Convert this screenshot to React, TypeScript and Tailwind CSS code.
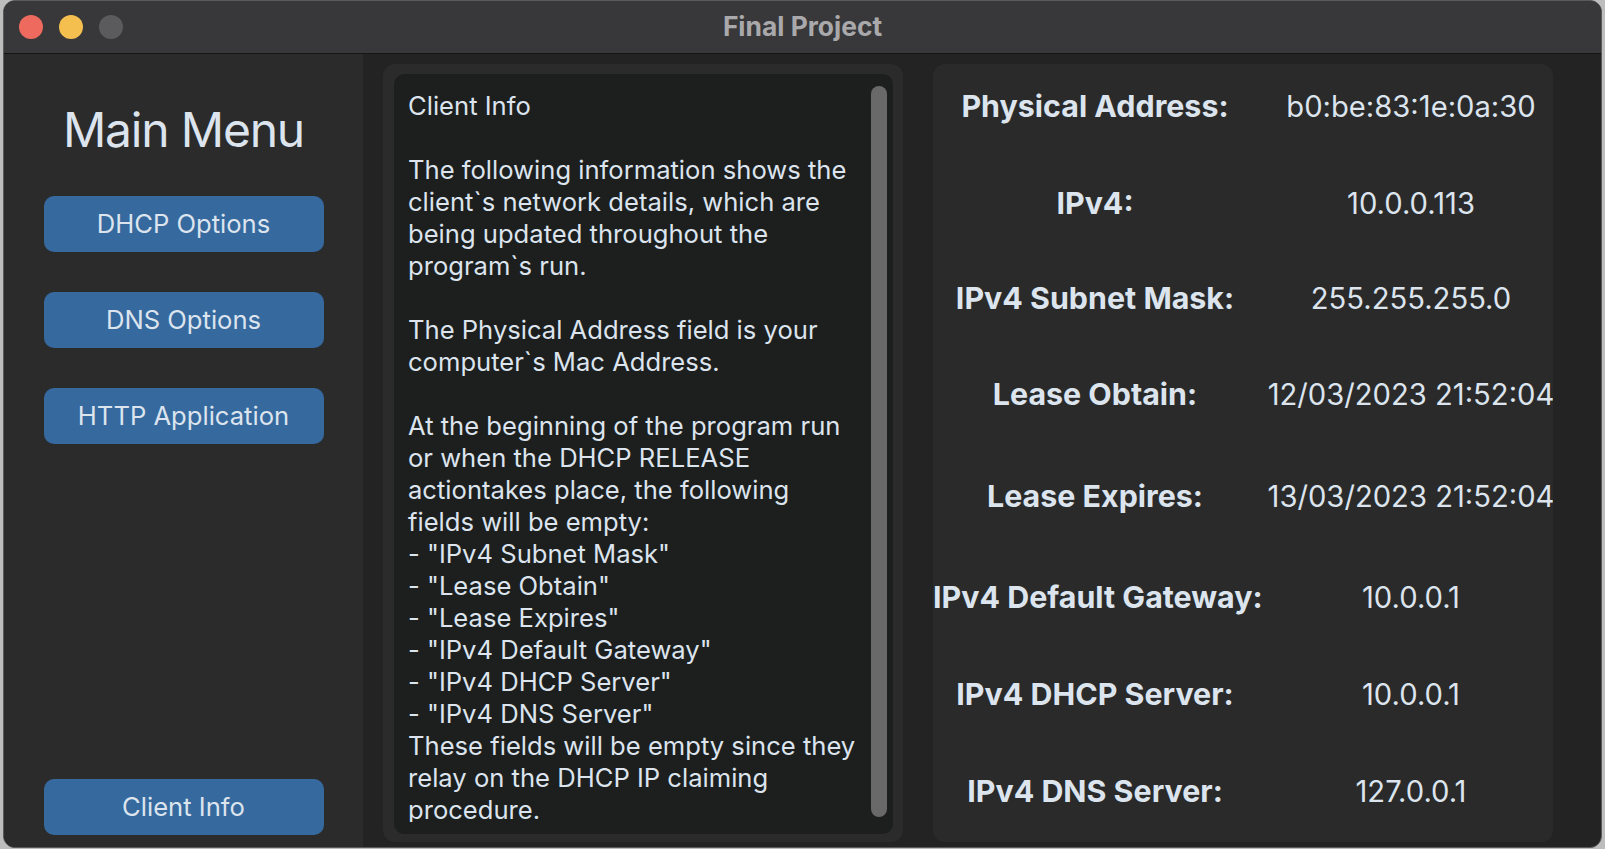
import React from "react";

const infoLines: string[] = [
  "Client Info",
  "",
  "The following information shows the",
  "client`s network details, which are",
  "being updated throughout the",
  "program`s run.",
  "",
  "The Physical Address field is your",
  "computer`s Mac Address.",
  "",
  "At the beginning of the program run",
  "or when the DHCP RELEASE",
  "actiontakes place, the following",
  "fields will be empty:",
  '- "IPv4 Subnet Mask"',
  '- "Lease Obtain"',
  '- "Lease Expires"',
  '- "IPv4 Default Gateway"',
  '- "IPv4 DHCP Server"',
  '- "IPv4 DNS Server"',
  "These fields will be empty since they",
  "relay on the DHCP IP claiming",
  "procedure.",
];

const rows: { label: string; value: string; mt: string }[] = [
  { label: "Physical Address:", value: "b0:be:83:1e:0a:30", mt: "mt-0" },
  { label: "IPv4:", value: "10.0.0.113", mt: "mt-[57px]" },
  { label: "IPv4 Subnet Mask:", value: "255.255.255.0", mt: "mt-[55px]" },
  { label: "Lease Obtain:", value: "12/03/2023 21:52:04", mt: "mt-[56px]" },
  { label: "Lease Expires:", value: "13/03/2023 21:52:04", mt: "mt-[62px]" },
  { label: "IPv4 Default Gateway:", value: "10.0.0.1", mt: "mt-[61px]" },
  { label: "IPv4 DHCP Server:", value: "10.0.0.1", mt: "mt-[57px]" },
  { label: "IPv4 DNS Server:", value: "127.0.0.1", mt: "mt-[57px]" },
];

function MenuButton({ children }: { children: React.ReactNode }) {
  return (
    <div className="w-[280px] h-[56px] shrink-0 rounded-[10px] bg-[#36699e] flex items-center justify-center text-[25.6px] text-[#dce4ee]">
      {children}
    </div>
  );
}

export default function App() {
  return (
    <div className="w-[1605px] h-[849px] bg-[#bdbdbd] pl-[3px] font-[Inter,sans-serif] overflow-hidden">
      <div className="w-[1599px] h-[848px] rounded-[12px] overflow-hidden border border-[#5a5a5a] bg-[#232323] flex flex-col">
        {/* Title bar */}
        <div className="h-[53px] shrink-0 bg-[#38383a] border-b border-[#151515] relative flex items-center justify-center">
          <div className="absolute left-[15px] top-[14px] flex gap-[16px]">
            <div className="w-[24px] h-[24px] rounded-full bg-[#ee6a5f]" />
            <div className="w-[24px] h-[24px] rounded-full bg-[#f5bf4f]" />
            <div className="w-[24px] h-[24px] rounded-full bg-[#5b5b5d]" />
          </div>
          <div className="text-[26.4px] font-bold text-[#a9a9ab] pb-[1px]">Final Project</div>
        </div>

        {/* Body */}
        <div className="flex flex-1 min-h-0">
          {/* Sidebar */}
          <div className="w-[359px] shrink-0 bg-[#2b2b2b] flex flex-col items-center pb-[12px]">
            <div className="mt-[47px] text-[48px] leading-[58px] text-[#dce4ee] tracking-[-1.2px]">Main Menu</div>
            <div className="mt-[37px] flex flex-col gap-[40px]">
              <MenuButton>DHCP Options</MenuButton>
              <MenuButton>DNS Options</MenuButton>
              <MenuButton>HTTP Application</MenuButton>
            </div>
            <div className="mt-auto">
              <MenuButton>Client Info</MenuButton>
            </div>
          </div>

          {/* Middle card */}
          <div className="ml-[20px] mt-[10px] w-[520px] h-[778px] shrink-0 rounded-[12px] bg-[#2b2b2b] pt-[10px] pl-[11px] pr-[10px] pb-[8px]">
            <div className="h-full rounded-[10px] bg-[#1d1e1e] flex">
              <div className="flex-1 mt-[12px] mb-[12px] pl-[14px] overflow-hidden">
                <div className="pt-[4px] text-[25.6px] leading-[32px] text-[#dce4ee] whitespace-pre">
                  {infoLines.map((l, i) => (
                    <div key={i} className="h-[32px]">{l === "" ? " " : l}</div>
                  ))}
                </div>
              </div>
              <div className="w-[16px] mt-[12px] mb-[17px] mr-[6px] ml-[4px] rounded-full bg-[#696969]" />
            </div>
          </div>

          {/* Right card */}
          <div className="ml-[30px] mt-[10px] w-[620px] h-[778px] shrink-0 rounded-[12px] bg-[#2a2a2a] overflow-hidden pt-[23px] flex flex-col">
            {rows.map((r) => (
              <div key={r.label} className={`${r.mt} h-[40px] flex items-center shrink-0`}>
                <div className="w-[324px] shrink-0 text-center text-[30.4px] font-bold text-[#dce4ee] whitespace-nowrap">
                  {r.label}
                </div>
                <div className="w-[308px] shrink-0 text-center text-[29.2px] text-[#dce4ee] whitespace-nowrap">
                  {r.value}
                </div>
              </div>
            ))}
          </div>
        </div>
      </div>
    </div>
  );
}
